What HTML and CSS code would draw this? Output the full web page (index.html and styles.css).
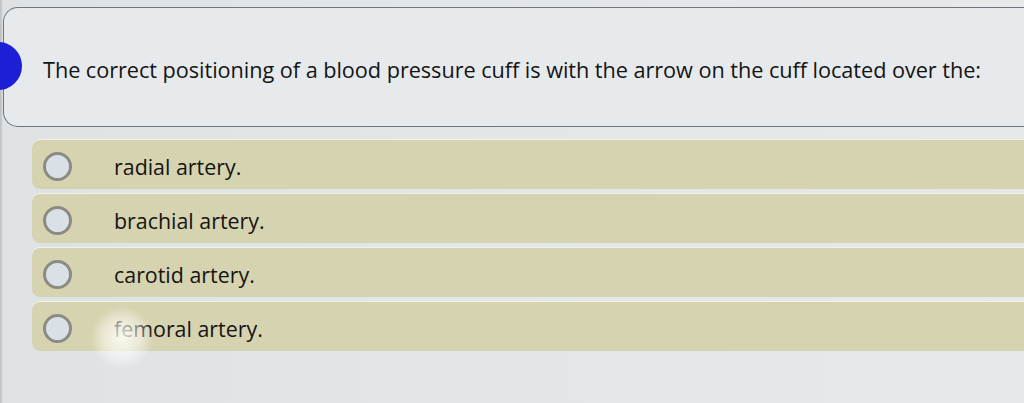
FILE: index.html
```html
<!DOCTYPE html>
<html>
<head>
<meta charset="utf-8">
<link rel="stylesheet" href="styles.css">
</head>
<body>
<div class="page">
  <div class="question">
    <span class="marker"></span>
    <p class="q-text">The correct positioning of a blood pressure cuff is with the arrow on the cuff located over the:</p>
  </div>
  <ul class="options">
    <li class="option"><span class="radio"></span><span class="label">radial artery.</span></li>
    <li class="option"><span class="radio"></span><span class="label">brachial artery.</span></li>
    <li class="option"><span class="radio"></span><span class="label">carotid artery.</span></li>
    <li class="option"><span class="radio"></span><span class="label">femoral artery.</span></li>
  </ul>
  <span class="glare"></span>
</div>
</body>
</html>
```
FILE: styles.css
```css
* { box-sizing: border-box; }
html, body { margin: 0; padding: 0; }
body {
  width: 1024px;
  height: 403px;
  overflow: hidden;
  background: linear-gradient(90deg, #b9bcbf 0, #dfe2e5 3px, #e3e6e9 40%, #e6e8ea 100%);
  font-family: "Open Sans", "Noto Sans", sans-serif;
  color: #141414;
}
.page {
  position: relative;
  height: 403px;
  padding-top: 7px;
}
.question {
  position: relative;
  margin-left: 3px;
  height: 120px;
  border: 1.5px solid #6f767d;
  border-right: none;
  border-radius: 15px 0 0 15px;
  background: #e7eaed;
  display: flex;
  align-items: center;
  padding-left: 39px;
}
.marker {
  position: absolute;
  left: -30px;
  top: 34px;
  width: 48px;
  height: 48px;
  border-radius: 50%;
  background: #1d1fd6;
}
.q-text {
  margin: 0;
  font-size: 21.7px;
  letter-spacing: -0.05px;
  white-space: nowrap;
  padding-top: 4px;
}
.options {
  list-style: none;
  margin: 13px 0 0 32px;
  padding: 0;
  display: flex;
  flex-direction: column;
  gap: 5px;
}
.option {
  height: 49px;
  background: #d6d3b0;
  border-radius: 8px 0 0 8px;
  display: flex;
  align-items: center;
  padding-left: 11px;
  box-shadow: 0 -1px 0 #f2f1e6;
}
.radio {
  width: 29px;
  height: 29px;
  border-radius: 50%;
  border: 3.5px solid #8b8b83;
  background: #d9e0e6;
  flex: none;
  margin-top: 3px;
}
.label {
  margin-left: 42px;
  font-size: 21.4px;
  padding-top: 3px;
}
.glare {
  position: absolute;
  left: 90px;
  top: 306px;
  width: 64px;
  height: 64px;
  border-radius: 50%;
  background: radial-gradient(circle, rgba(255,255,250,0.85) 0, rgba(255,255,250,0.5) 40%, rgba(255,255,250,0) 70%);
  pointer-events: none;
}
```
